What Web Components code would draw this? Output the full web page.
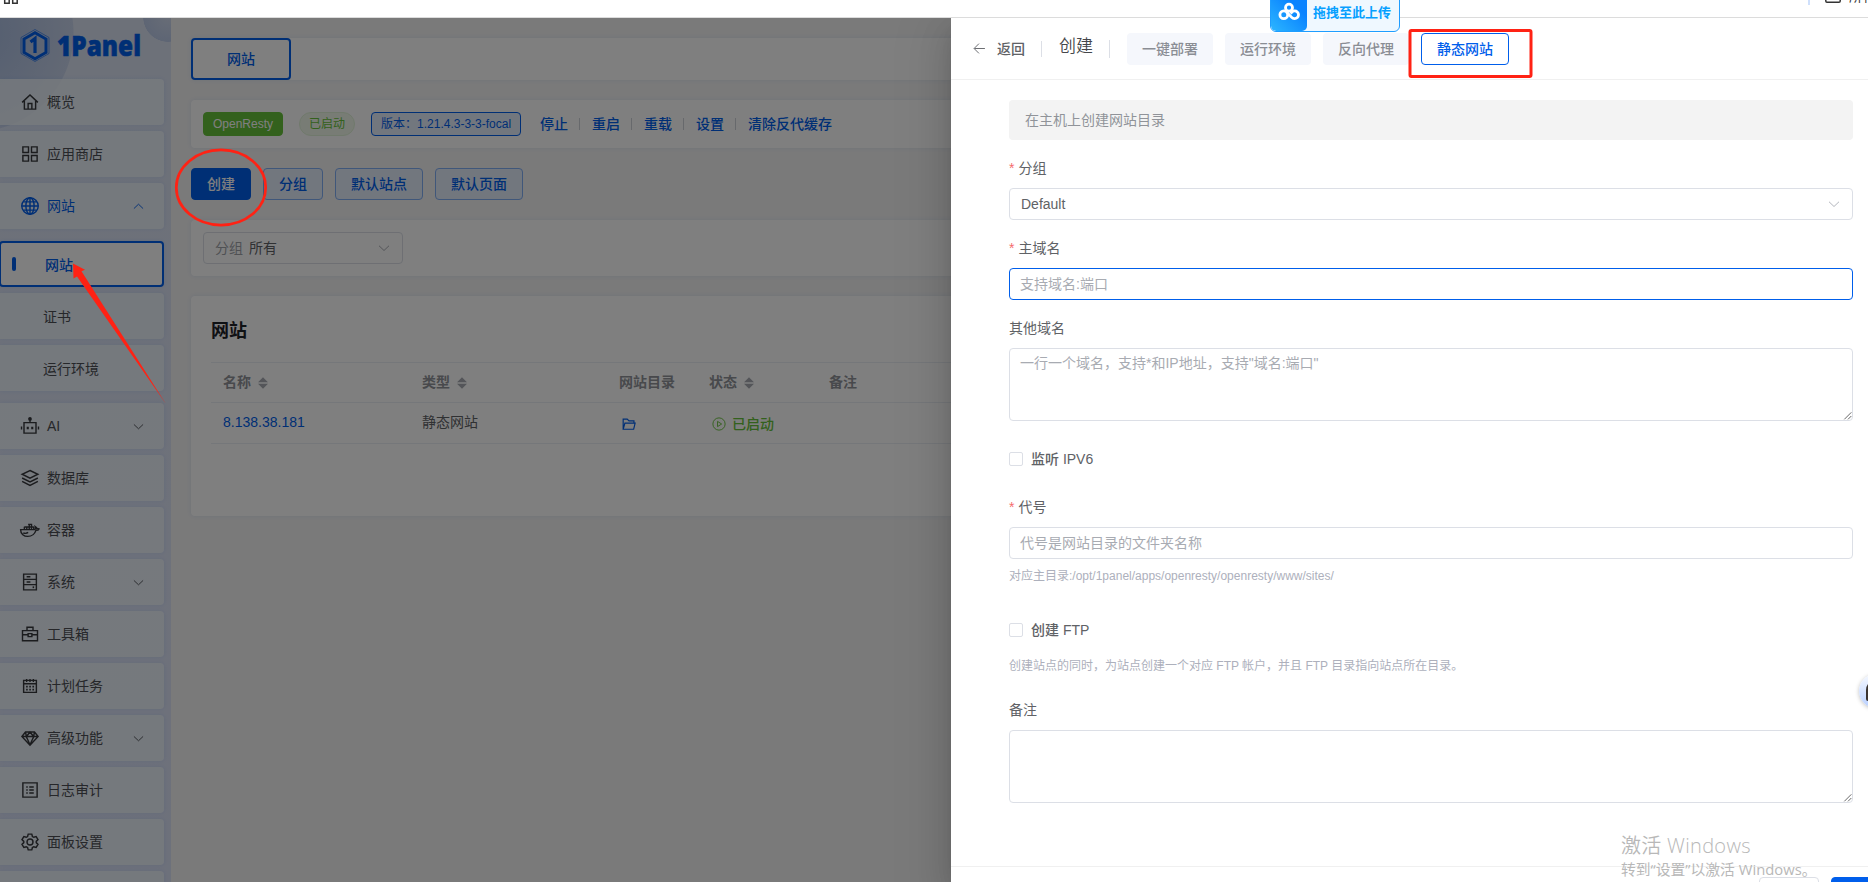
<!DOCTYPE html>
<html lang="zh-CN">
<head>
<meta charset="utf-8">
<title>1Panel</title>
<style>
    html, body { margin: 0; height: 100%; overflow: hidden; }
    body {
        --primary: #005eeb;
        --border: #dcdfe6;
        --text: #606266;
        --muted: #909399;
        font: 14px/22px "Liberation Sans", "Noto Sans CJK SC", sans-serif;
        color: var(--text);
        background: #fff;
    }
</style>
</head>
<body>
<op-app></op-app>

<script>
/** Icon shapes, drawn on a 24x24 grid with currentColor. */
const ICONS = {
    home: '<path d="M1.5 12.5 12 2.5l10.500 10M4.500 10.500v11h15v-11M9.500 21.500V14h5v7.500"/>',
    grid: '<path d="M2.500 2.500h7.500v7.500H2.500zM14 2.500h7.500v7.500H14zM2.500 14h7.500v7.500H2.500zM14 14h7.500v7.500H14z"/>',
    globe: '<circle cx="12" cy="12" r="11"/><ellipse cx="12" cy="12" rx="5.500" ry="11"/><path d="M12 1v22M1 12h22M3 6.500h18M3 17.500h18"/>',
    robot: '<path d="M4 7.500h16v14H4zM12 7.500V4M.7 12.500v4M23.300 12.500v4"/><circle cx="12" cy="2.500" r="1.500" fill="currentColor"/><path d="M9 13v3.200M15 13v3.200" stroke-width="2.800"/>',
    layers: '<path d="M12 2 22.500 7 12 12.200 1.500 7zM1.500 12 12 17.200 22.500 12M1.500 16.500 12 22l10.500-5.500"/>',
    docker: '<path d="M-.5 11.500h18.500c1 0 1.500-2.500 1-4 1.200.7 1.800 1.600 2 2.600.8-.2 2 0 3 .4-.6 1.600-2.600 2-4 2-1.800 5-5.500 8-11 8-5 0-9.500-3-9.500-9z"/><path d="M4.500 7.500v3.500M7.700 7.500v3.500M11 3.500v7.500M14 3.500v7.500M17 7.500V11M4.500 8h12.500M9.500 4.500H14"/><path d="M3 16c3 1 5 .5 6.500-.8"/>',
    server: '<path d="M3.500 1.500h17v21h-17zM3.500 8.500h17M3.500 15.500h17M7.500 5h5M7.500 12h5"/><path d="M15.500 19h2" stroke-width="2.400"/>',
    toolbox: '<path d="M2 7.500h20v13.500H2zM8 7.500V3h8v4.500M2 13h7M15 13h7M9.500 11.500v4h5v-4z"/>',
    calendar: '<path d="M3.500 4.500h17v16h-17zM3.500 9h17M7.500 2.500v4M12 2.500v4M16.500 2.500v4"/><path stroke-dasharray="2.200 2" d="M6.800 12.800h11M6.800 16.800h11" stroke-width="2.400"/>',
    diamond: '<path d="M6 4h12l4.800 6L12 21.500 1.200 10zM1.200 10h21.600M7 10l5 11M17 10l-5 11M6 4l1.200 6L12 4l4.800 6L18 4"/>',
    log: '<path d="M2.500 2.500h19v19h-19zM7 8h2M11 8h6M7 12h2M11 12h6M7 16h2M11 16h6"/>',
    gear: '<path d="M9.600 1.500h4.800l.8 3.200 1.800 1 3.200-1 2.500 4.100-2.400 2.400v1.600l2.400 2.400-2.500 4.100-3.200-1-1.800 1-.8 3.200H9.600l-.8-3.200-1.800-1-3.200 1-2.500-4.100 2.400-2.400v-1.600L1.300 8.800l2.500-4.100 3.200 1 1.800-1z"/><circle cx="12" cy="12" r="4"/>',
    up: '<path d="m2 16.500 10-9.500 10 9.500"/>',
    down: '<path d="m2 7.500 10 9.500 10-9.500"/>',
    back: '<path d="M22 12H2.500M11 3l-9 9 9 9"/>',
    folder: '<path d="M2 21V3.500h7l3 3h8.500V10M2 21 5 10.500h17.500L20 21z"/>',
    play: '<circle cx="12" cy="12" r="10.500"/><path d="M9.500 7.500v9l7-4.500z"/>',
    sort: '<path d="M12 .5 22 10.500H2zM12 23.500 2 13.500h20z" fill="currentColor" stroke="none"/>',
    resize: '<path d="M1 22 22 1M12 22l10-10"/>'
};

/** <op-icon name="home" size="18"> */
class OpIcon extends HTMLElement {
    constructor() {
        super();
        this.attachShadow({ mode: "open" });
    }

    connectedCallback() {
        const size = this.getAttribute("size") || 18;
        const weight = this.getAttribute("weight") || 1.6;
        this.shadowRoot.innerHTML = `
            <style>
                :host { display: inline-flex; flex: none; }
                svg { display: block; overflow: visible; }
            </style>
            <svg width="${size}" height="${size}" viewBox="0 0 24 24" fill="none"
                 stroke="currentColor" stroke-width="${weight}">${ICONS[this.getAttribute("name")]}</svg>
        `;
    }
}
customElements.define("op-icon", OpIcon);

/** <op-menu-item icon="home" arrow="down" active sub> */
class OpMenuItem extends HTMLElement {
    constructor() {
        super();
        this.attachShadow({ mode: "open" });
    }

    connectedCallback() {
        const icon = this.getAttribute("icon");
        const arrow = this.getAttribute("arrow");
        this.shadowRoot.innerHTML = `
            <style>
                :host {
                    display: flex;
                    align-items: center;
                    box-sizing: border-box;
                    height: 46px;
                    flex: none;
                    padding: 0 20px 0 21px;
                    gap: 8px;
                    color: #4c4f54;
                    background: rgba(240, 246, 252, 0.78);
                    border-radius: 0 4px 4px 0;
                    box-shadow: 0 0 4px rgba(0, 94, 235, 0.1);
                }
                :host([open]) { color: var(--primary); }
                :host([sub]) { padding-left: 43px; }
                :host([sub][active]) {
                    margin-left: -1px;
                    padding-left: 11px;
                    gap: 29px;
                    border: 2px solid var(--primary);
                    border-radius: 4px;
                    background: #fff;
                    color: var(--primary);
                    font-weight: 500;
                }
                .mark { width: 4px; height: 14px; border-radius: 2px; background: var(--primary); }
                .label { flex: 1; }
                :host([sub]) .label { padding-top: 1px; }
                .lead { color: #36383c; }
                :host([open]) .lead { color: var(--primary); }
            </style>
            ${icon ? `<op-icon class="lead" name="${icon}" size="18" weight="1.900"></op-icon>` : ""}
            ${this.hasAttribute("active") ? '<span class="mark"></span>' : ""}
            <span class="label"><slot></slot></span>
            ${arrow ? `<op-icon name="${arrow}" size="11" weight="2"></op-icon>` : ""}
        `;
    }
}
customElements.define("op-menu-item", OpMenuItem);

/** Logo, then the navigation list. */
class OpSidebar extends HTMLElement {
    constructor() {
        super();
        this.attachShadow({ mode: "open" });
    }

    connectedCallback() {
        this.shadowRoot.innerHTML = `
            <style>
                :host {
                    display: flex;
                    flex-direction: column;
                    box-sizing: border-box;
                    width: 171px;
                    flex: none;
                    padding-right: 7px;
                    overflow: hidden;
                    background:
                        radial-gradient(circle at 168px -1px, #d0daee 0, #bccbe9 24.500px, transparent 25px),
                        radial-gradient(circle at -25px 15px, #a6bbe0 0, #c6d2ea 98px, transparent 99px),
                        linear-gradient(180deg, #dae2f2, #dde4f6 60%, #dbe2f6);
                }
                .logo { display: block; height: 61px; flex: none; }
                nav { display: flex; flex-direction: column; gap: 6px; }
                .group { display: flex; flex-direction: column; gap: 6px; padding: 6px 0; }
            </style>
            <svg class="logo" width="164" height="61" viewBox="0 0 164 61">
                <g fill="none" stroke="#005eeb">
                    <path d="M35 11.500 49 19.500v16L35 43.500 21 35.500v-16z" stroke-width=".8" opacity=".7"/>
                    <path d="M31.500 16.700 24 21v13.500l11 6.300 3.500-2M38.500 38.800 46 34.500V21l-11-6.300-3.500 2" stroke-width="3"/>
                    <path d="m30.500 24 4.500-3.500V35" stroke-width="3.200"/>
                </g>
                <text x="57" y="38" fill="#005eeb" stroke="#005eeb" stroke-width=".6" font-family="Open Sans, sans-serif" font-size="29"
                      font-weight="800" textLength="84" lengthAdjust="spacingAndGlyphs">1Panel</text>
            </svg>
            <nav>
                <op-menu-item icon="home">概览</op-menu-item>
                <op-menu-item icon="grid">应用商店</op-menu-item>
                <op-menu-item icon="globe" arrow="up" open>网站</op-menu-item>
                <div class="group">
                    <op-menu-item sub active>网站</op-menu-item>
                    <op-menu-item sub>证书</op-menu-item>
                    <op-menu-item sub>运行环境</op-menu-item>
                </div>
                <op-menu-item icon="robot" arrow="down">AI</op-menu-item>
                <op-menu-item icon="layers">数据库</op-menu-item>
                <op-menu-item icon="docker">容器</op-menu-item>
                <op-menu-item icon="server" arrow="down">系统</op-menu-item>
                <op-menu-item icon="toolbox">工具箱</op-menu-item>
                <op-menu-item icon="calendar">计划任务</op-menu-item>
                <op-menu-item icon="diamond" arrow="down">高级功能</op-menu-item>
                <op-menu-item icon="log">日志审计</op-menu-item>
                <op-menu-item icon="gear">面板设置</op-menu-item>
                <op-menu-item></op-menu-item>
            </nav>
        `;
    }
}
customElements.define("op-sidebar", OpSidebar);

/** <op-card> white panel with a faint blue shadow. */
class OpCard extends HTMLElement {
    constructor() {
        super();
        this.attachShadow({ mode: "open" });
        this.shadowRoot.innerHTML = `
            <style>
                :host {
                    display: block;
                    box-sizing: border-box;
                    background: #fff;
                    border-radius: 4px;
                    box-shadow: 0 0 4px rgba(0, 94, 235, 0.1);
                }
            </style>
            <slot></slot>
        `;
    }
}
customElements.define("op-card", OpCard);

/** <op-button kind="primary|plain|grey|outline|tab"> */
class OpButton extends HTMLElement {
    constructor() {
        super();
        this.attachShadow({ mode: "open" });
        this.shadowRoot.innerHTML = `
            <style>
                :host {
                    display: inline-flex;
                    align-items: center;
                    justify-content: center;
                    box-sizing: border-box;
                    flex: none;
                    height: 32px;
                    padding: 0 15px;
                    border: 1px solid transparent;
                    border-radius: 4px;
                    font-weight: 500;
                    white-space: nowrap;
                }
                :host([kind="primary"]) { color: #fff; background: var(--primary); border-color: var(--primary); }
                :host([kind="plain"]) { color: var(--primary); background: #e5eefd; border-color: #80aef5; }
                :host([kind="grey"]) { color: #8a8d94; background: #f5f7fc; border: 0; }
                :host([kind="outline"]) { color: var(--primary); background: #fff; border-color: var(--primary); }
                :host([kind="tab"]) { color: var(--primary); background: #fff; border: 2px solid var(--primary); width: 100px; height: 42px; }
                :host([kind="default"]) { background: #fff; border-color: var(--border); }
            </style>
            <slot></slot>
        `;
    }
}
customElements.define("op-button", OpButton);

/** <op-tag kind="success|round|version"> */
class OpTag extends HTMLElement {
    constructor() {
        super();
        this.attachShadow({ mode: "open" });
        this.shadowRoot.innerHTML = `
            <style>
                :host {
                    display: inline-flex;
                    align-items: center;
                    box-sizing: border-box;
                    height: 24px;
                    padding: 0 9px;
                    border: 1px solid;
                    border-radius: 4px;
                    font-size: 12px;
                    white-space: nowrap;
                }
                :host([kind="success"]) { color: #fff; background: #67c23a; border-color: #67c23a; }
                :host([kind="round"]) { color: #67c23a; background: #f0f9eb; border-color: #e1f3d8; border-radius: 12px; }
                :host([kind="version"]) { color: var(--primary); background: #e5eefd; border-color: var(--primary); }
            </style>
            <slot></slot>
        `;
    }
}
customElements.define("op-tag", OpTag);

/** Site list page behind the drawer. */
class OpWebsites extends HTMLElement {
    constructor() {
        super();
        this.attachShadow({ mode: "open" });
    }

    connectedCallback() {
        this.shadowRoot.innerHTML = `
            <style>
                :host {
                    display: flex;
                    flex-direction: column;
                    flex: 1;
                    gap: 20px;
                    padding: 20px 20px 0;
                    background: #f4f4f4;
                }
                .tabs { height: 42px; }
                .status { height: 48px; padding: 12px; display: flex; align-items: center; }
                .status op-tag + op-tag { margin-left: 16px; }
                .links { display: flex; align-items: center; margin-left: 19px; color: var(--primary); font-weight: 500; }
                .links i { width: 1px; height: 12px; margin: 0 12px 0 11px; background: #cfd2d9; }
                .buttons { display: flex; gap: 12px; }
                .filter { height: 56px; padding: 12px; }
                .select {
                    display: flex;
                    align-items: center;
                    box-sizing: border-box;
                    width: 200px;
                    height: 32px;
                    padding: 0 12px 0 11px;
                    gap: 6px;
                    border: 1px solid var(--border);
                    border-radius: 4px;
                }
                .select span { flex: 1; }
                .select em { font-style: normal; color: #a0a3a9; }
                .select op-icon { color: #a8abb2; }
                .list { height: 220px; padding: 20px 20px 0; }
                h3 { margin: 0; padding-top: 1px; height: 45px; line-height: 28px; font-size: 18px; font-weight: 700; color: #1f2329; }
                .row {
                    display: grid;
                    grid-template-columns: 199px 197px 90px 120px 1fr;
                    align-items: center;
                    height: 40px;
                    padding-left: 12px;
                    border-bottom: 1px solid #ebeef5;
                }
                .head { height: 39px; border-top: 1px solid #ebeef5; color: var(--muted); font-weight: 700; }
                .row span { display: flex; align-items: center; gap: 6px; padding-bottom: 2px; }
                .head op-icon { color: #a8abb2; margin-top: 2px; }
                .name { color: var(--primary); }
                .row .dir { color: var(--primary); padding: 2px 0 0 3px; }
                .row .ok { color: #67c23a; font-weight: 500; padding: 2px 0 0 3px; }
            </style>
            <op-card class="tabs"><op-button kind="tab">网站</op-button></op-card>
            <op-card class="status">
                <op-tag kind="success">OpenResty</op-tag>
                <op-tag kind="round">已启动</op-tag>
                <op-tag kind="version">版本：1.21.4.3-3-3-focal</op-tag>
                <div class="links">停止<i></i>重启<i></i>重载<i></i>设置<i></i>清除反代缓存</div>
            </op-card>
            <div class="buttons">
                <op-button kind="primary">创建</op-button>
                <op-button kind="plain">分组</op-button>
                <op-button kind="plain">默认站点</op-button>
                <op-button kind="plain">默认页面</op-button>
            </div>
            <op-card class="filter">
                <div class="select"><em>分组</em><span>所有</span><op-icon name="down" size="12" weight="2"></op-icon></div>
            </op-card>
            <op-card class="list">
                <h3>网站</h3>
                <div class="row head">
                    <span>名称<op-icon name="sort" size="12"></op-icon></span>
                    <span>类型<op-icon name="sort" size="12"></op-icon></span>
                    <span>网站目录</span>
                    <span>状态<op-icon name="sort" size="12"></op-icon></span>
                    <span>备注</span>
                </div>
                <div class="row">
                    <span class="name">8.138.38.181</span>
                    <span>静态网站</span>
                    <span class="dir"><op-icon name="folder" size="14" weight="2"></op-icon></span>
                    <span class="ok"><op-icon name="play" size="14"></op-icon>已启动</span>
                    <span></span>
                </div>
            </op-card>
        `;
    }
}
customElements.define("op-websites", OpWebsites);

/**
 * <op-field label="分组" required kind="input|select|textarea" value="" placeholder="" hint="">
 */
class OpField extends HTMLElement {
    constructor() {
        super();
        this.attachShadow({ mode: "open" });
    }

    connectedCallback() {
        const kind = this.getAttribute("kind") || "input";
        const value = this.getAttribute("value");
        const hint = this.getAttribute("hint");
        this.shadowRoot.innerHTML = `
            <style>
                :host { display: block; }
                .label { display: flex; gap: 4px; height: 22px; margin: -1px 0 9px; }
                .label b { color: #f56c6c; font-weight: 400; }
                .box {
                    display: flex;
                    position: relative;
                    align-items: center;
                    justify-content: space-between;
                    box-sizing: border-box;
                    height: 32px;
                    padding: 0 12px 0 10px;
                    border: 1px solid var(--border);
                    border-radius: 4px;
                    background: #fff;
                }
                .select { padding-left: 11px; }
                :host([focused]) .box { border-color: var(--primary); }
                .textarea { height: 73px; align-items: flex-start; padding: 4px 10px 5px; line-height: 21px; }
                .empty { color: #a8abb2; }
                .box op-icon { color: #b4b7be; }
                .box .grip { position: absolute; right: 0; bottom: 0; color: #4a4a4a; }
                .hint { height: 22px; margin-top: 6px; font-size: 12px; color: #adb0bc; }
            </style>
            <div class="label">${this.hasAttribute("required") ? "<b>*</b>" : ""}<span>${this.getAttribute("label")}</span></div>
            <div class="box ${kind}">
                <span class="${value ? "" : "empty"}">${value || this.getAttribute("placeholder") || ""}</span>
                ${kind === "select" ? '<op-icon name="down" size="12" weight="2"></op-icon>' : ""}
                ${kind === "textarea" ? '<op-icon class="grip" name="resize" size="8" weight="2.500"></op-icon>' : ""}
            </div>
            ${hint ? `<div class="hint">${hint}</div>` : ""}
        `;
    }
}
customElements.define("op-field", OpField);

/** <op-checkbox>label</op-checkbox> */
class OpCheckbox extends HTMLElement {
    constructor() {
        super();
        this.attachShadow({ mode: "open" });
        this.shadowRoot.innerHTML = `
            <style>
                :host { display: flex; align-items: center; height: 32px; gap: 8px; font-weight: 500; }
                i { box-sizing: border-box; width: 14px; height: 14px; border: 1px solid var(--border); border-radius: 2px; }
            </style>
            <i></i><span><slot></slot></span>
        `;
    }
}
customElements.define("op-checkbox", OpCheckbox);

/** Create-site drawer, over the page from the right. */
class OpDrawer extends HTMLElement {
    constructor() {
        super();
        this.attachShadow({ mode: "open" });
    }

    connectedCallback() {
        this.shadowRoot.innerHTML = `
            <style>
                :host {
                    display: flex;
                    flex-direction: column;
                    background: #fff;
                    box-shadow: 0 16px 48px 16px rgba(0, 0, 0, 0.08), 0 12px 32px rgba(0, 0, 0, 0.12), 0 8px 16px -8px rgba(0, 0, 0, 0.16);
                }
                header {
                    display: flex;
                    align-items: center;
                    box-sizing: border-box;
                    height: 62px;
                    flex: none;
                    padding: 0 0 0 22px;
                    border-bottom: 1px solid #f0f0f0;
                }
                .back { margin-left: 11px; font-weight: 500; }
                header i { width: 1px; height: 16px; background: #dcdfe6; margin: 0 17px 0 16px; }
                header i + strong + i { height: 18px; margin: 0 17px 0 16px; }
                strong { font-size: 17px; font-weight: 350; color: #45474b; margin-bottom: 3px; }
                header op-button + op-button { margin-left: 12px; }
                main { flex: 1; padding: 20px 15px 0 58px; }
                .info { height: 40px; line-height: 40px; padding-left: 16px; border-radius: 4px; background: #f3f3f3; color: var(--muted); margin-bottom: 18px; }
                op-field { margin-bottom: 18px; }
                op-checkbox { margin: 22px 0; }
                .code { margin-bottom: 27px; }
                .ftp { margin-bottom: 9px; }
                .hint { height: 22px; margin-bottom: 23px; font-size: 12px; color: #adb0bc; }
                footer {
                    display: flex;
                    justify-content: flex-end;
                    gap: 12px;
                    box-sizing: border-box;
                    height: 16px;
                    flex: none;
                    overflow: hidden;
                    padding: 10px 0 0;
                    margin-right: -23px;
                    border-top: 1px solid #f0f0f0;
                }
                footer op-button { width: 60px; }
            </style>
            <header>
                <op-icon name="back" size="13" weight="1.700"></op-icon>
                <span class="back">返回</span><i></i><strong>创建</strong><i></i>
                <op-button kind="grey">一键部署</op-button>
                <op-button kind="grey">运行环境</op-button>
                <op-button kind="grey">反向代理</op-button>
                <op-button kind="outline">静态网站</op-button>
            </header>
            <main>
                <div class="info">在主机上创建网站目录</div>
                <op-field label="分组" required kind="select" value="Default"></op-field>
                <op-field label="主域名" required focused placeholder="支持域名:端口"></op-field>
                <op-field label="其他域名" kind="textarea" placeholder="一行一个域名，支持*和IP地址，支持&quot;域名:端口&quot;"></op-field>
                <op-checkbox>监听 IPV6</op-checkbox>
                <op-field class="code" label="代号" required placeholder="代号是网站目录的文件夹名称" hint="对应主目录:/opt/1panel/apps/openresty/openresty/www/sites/"></op-field>
                <op-checkbox class="ftp">创建 FTP</op-checkbox>
                <div class="hint">创建站点的同时，为站点创建一个对应 FTP 帐户，并且 FTP 目录指向站点所在目录。</div>
                <op-field label="备注" kind="textarea"></op-field>
            </main>
            <footer><op-button kind="default"></op-button><op-button kind="primary"></op-button></footer>
        `;
    }
}
customElements.define("op-drawer", OpDrawer);

/** Lower edge of the browser's bookmark bar. */
class OpBookmarks extends HTMLElement {
    constructor() {
        super();
        this.attachShadow({ mode: "open" });
        this.shadowRoot.innerHTML = `
            <style>
                :host {
                    display: flex;
                    align-items: flex-start;
                    box-sizing: border-box;
                    height: 18px;
                    flex: none;
                    overflow: hidden;
                    background: #fff;
                    border-bottom: 1px solid #dcdcdc;
                    color: #333;
                }
                svg { display: block; flex: none; }
                .bar { width: 2px; height: 5px; margin-left: auto; background: #cfe0fc; }
                .folder { margin: 0 8px 0 15px; }
                .text { width: 19px; flex: none; margin-top: -14px; font-size: 13px; white-space: nowrap; }
            </style>
            <svg width="20" height="6" viewBox="0 0 20 6" fill="none" stroke="currentColor" stroke-width="1.500">
                <path d="M4.700-2v5.300h4.500V-2M12.700-2v5.300h4.500V-2"/>
            </svg>
            <div class="bar"></div>
            <svg class="folder" width="16" height="4" viewBox="0 0 16 4" fill="none" stroke="currentColor" stroke-width="1.500">
                <path d="M.8-3V1q0 1.300 1.200 1.300h12q1.200 0 1.200-1.300V-3"/>
            </svg>
            <span class="text">所有</span>
        `;
    }
}
customElements.define("op-bookmarks", OpBookmarks);

/** <op-upload-badge> drop target of the net-disk extension. */
class OpUploadBadge extends HTMLElement {
    constructor() {
        super();
        this.attachShadow({ mode: "open" });
        this.shadowRoot.innerHTML = `
            <style>
                :host {
                    display: flex;
                    align-items: center;
                    box-sizing: border-box;
                    border: 1px solid #1f9dff;
                    border-radius: 6px;
                    overflow: hidden;
                    background: #eff8ff;
                    color: #06a0ff;
                    font-size: 13px;
                    font-weight: 700;
                    white-space: nowrap;
                }
                .logo { display: flex; align-items: center; justify-content: center; width: 36px; height: 100%; margin-right: 6px; border-radius: 0 0 5px 5px; background: linear-gradient(45deg, #2cb6ff, #0a83ff 70%); }
                .text { padding-bottom: 1px; }
            </style>
            <span class="logo">
                <svg width="22" height="22" viewBox="0 0 22 22" fill="none" stroke="#fff" stroke-width="2.800">
                    <circle cx="11" cy="5.700" r="3.500"/><circle cx="5.800" cy="12.800" r="3.900"/><path d="m8.500 10 5.200 5.400a3.900 3.900 0 1 0 0-5.200l-1.200 1.300"/>
                </svg>
            </span>
            <span class="text">拖拽至此上传</span>
        `;
    }
}
customElements.define("op-upload-badge", OpUploadBadge);

class OpApp extends HTMLElement {
    constructor() {
        super();
        this.attachShadow({ mode: "open" });
    }

    connectedCallback() {
        this.shadowRoot.innerHTML = `
            <style>
                :host { display: flex; flex-direction: column; height: 100vh; position: relative; overflow: hidden; }
                .page { display: flex; flex: 1; min-height: 0; position: relative; overflow: hidden; }
                .mask { position: absolute; inset: 0; background: rgba(0, 0, 0, 0.5); }
                op-drawer { position: absolute; top: 0; right: 0; bottom: 0; width: 917px; }
                op-upload-badge { position: absolute; left: 1270px; top: -6px; width: 130px; height: 38px; }
                .assistant {
                    position: absolute;
                    left: 1859px;
                    top: 674px;
                    width: 34px;
                    height: 34px;
                    border-radius: 50%;
                    background: linear-gradient(#f6f9ff, #b9d0ff);
                    box-shadow: 0 1px 4px rgba(0, 0, 0, 0.25);
                }
                .assistant::after { content: ""; position: absolute; left: 7px; top: 6px; width: 20px; height: 21px; border-radius: 10px 10px 2px 2px; background: #3a3431; }
                .activate { position: absolute; left: 1621px; top: 833px; color: #b8b8b8; font-family: "Open Sans", "Noto Sans CJK SC", sans-serif; white-space: nowrap; }
                .activate div { font-size: 20px; line-height: 25px; font-weight: 350; letter-spacing: 0.300px; }
                .activate p { margin: 0; font-size: 14.800px; line-height: 23px; }
                .marks { position: absolute; inset: 0; }
            </style>
            <op-bookmarks></op-bookmarks>
            <div class="page">
                <op-sidebar></op-sidebar>
                <op-websites></op-websites>
                <div class="mask"></div>
                <op-drawer></op-drawer>
            </div>
            <op-upload-badge></op-upload-badge>
            <div class="assistant"></div>
            <div class="activate"><div>激活 Windows</div><p>转到“设置”以激活 Windows。</p></div>
            <svg class="marks" width="1868" height="882" fill="none" stroke="#ff2214">
                <ellipse cx="221" cy="187.500" rx="44.700" ry="37.600" stroke-width="2.700"/>
                <rect x="1410" y="30.500" width="121" height="46" rx="1.500" stroke-width="3"/>
                <path d="M73 263.500 85 269.800l-3.500 1.500L166 404 77 276.500l-3.500 2z" fill="#ff2214" stroke="none"/>
            </svg>
        `;
    }
}
customElements.define("op-app", OpApp);
</script>
</body>
</html>
